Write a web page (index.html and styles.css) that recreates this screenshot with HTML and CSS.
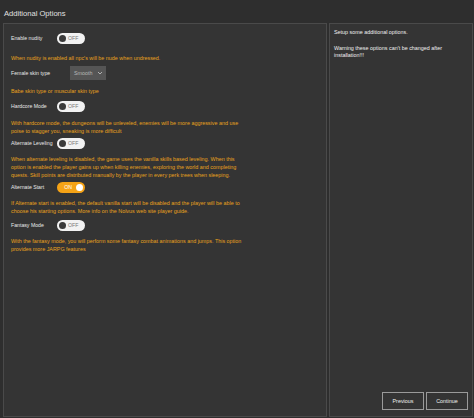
FILE: index.html
```html
<!DOCTYPE html>
<html>
<head>
<meta charset="utf-8">
<link rel="stylesheet" href="styles.css">
</head>
<body>
<div class="app">
  <div class="title">Additional Options</div>
  <div class="main">
    <div class="panel left">
      <div class="option">
        <div class="row"><span class="label">Enable nudity</span><span class="toggle off"><span class="knob"></span><span class="ttext">OFF</span></span></div>
        <p class="desc">When nudity is enabled all npc's will be nude when undressed.</p>
      </div>
      <div class="option">
        <div class="row"><span class="label wide">Female skin type</span><span class="select">Smooth<svg class="chev" viewBox="0 0 6 4" width="6" height="4"><path d="M1 1 L3 3 L5 1" fill="none" stroke="#bbb" stroke-width="0.9"/></svg></span></div>
        <p class="desc">Babe skin type or muscular skin type</p>
      </div>
      <div class="option">
        <div class="row"><span class="label">Hardcore Mode</span><span class="toggle off"><span class="knob"></span><span class="ttext">OFF</span></span></div>
        <p class="desc">With hardcore mode, the dungeons will be unleveled, enemies will be more aggressive and use poise to stagger you, sneaking is more difficult</p>
      </div>
      <div class="option">
        <div class="row"><span class="label">Alternate Leveling</span><span class="toggle off"><span class="knob"></span><span class="ttext">OFF</span></span></div>
        <p class="desc">When alternate leveling is disabled, the game uses the vanilla skills based leveling. When this option is enabled the player gains up when killing enemies, exploring the world and completing quests. Skill points are distributed manually by the player in every perk trees when sleeping.</p>
      </div>
      <div class="option">
        <div class="row"><span class="label">Alternate Start</span><span class="toggle on"><span class="ttext">ON</span><span class="knob"></span></span></div>
        <p class="desc">If Alternate start is enabled, the default vanilla start will be disabled and the player will be able to choose his starting options. More info on the Nolvus web site player guide.</p>
      </div>
      <div class="option">
        <div class="row"><span class="label">Fantasy Mode</span><span class="toggle off"><span class="knob"></span><span class="ttext">OFF</span></span></div>
        <p class="desc">With the fantasy mode, you will perform some fantasy combat animations and jumps. This option provides more JARPG features</p>
      </div>
    </div>
    <div class="panel right">
      <div class="info">
        <p>Setup some additional options.</p>
        <p>Warning these options can't be changed after installation!!!</p>
      </div>
      <div class="buttons">
        <button class="btn">Previous</button>
        <button class="btn">Continue</button>
      </div>
    </div>
  </div>
</div>
</body>
</html>
```
FILE: styles.css
```css
* { box-sizing: border-box; }
html, body { margin: 0; padding: 0; }
body {
  width: 474px;
  height: 418px;
  background: #2e2e2e;
  font-family: "Liberation Sans", Arial, sans-serif;
  color: #e6e6e6;
  overflow: hidden;
}
.app {
  display: flex;
  flex-direction: column;
  height: 418px;
}
.title {
  height: 23px;
  padding: 8px 0 0 4px;
  font-size: 7.6px;
  color: #e0e0e0;
  line-height: 12px;
}
.main {
  flex: 1;
  display: flex;
  gap: 2px;
  padding: 0 1px 1px 3px;
}
.panel {
  background: #343434;
  border: 1px solid #4a4a4a;
}
.left {
  width: 324px;
  padding: 8px 8px 0 7px;
}
.right {
  flex: 1;
  display: flex;
  flex-direction: column;
  justify-content: space-between;
  padding: 5px 4px 6px 4px;
}
.option {
  margin-bottom: 5px;
}
.option:nth-child(3),
.option:nth-child(4) { margin-bottom: 2px; }
.option:nth-child(5) { margin-bottom: 4px; }
.row {
  display: flex;
  align-items: center;
  height: 12px;
}
.label {
  width: 46px;
  font-size: 5.2px;
  color: #e8e8e8;
  white-space: nowrap;
}
.label.wide { width: 59px; }
.toggle {
  width: 28px;
  height: 11px;
  border-radius: 6px;
  display: flex;
  align-items: center;
  padding: 0 2px;
  gap: 2px;
}
.toggle.off { background: #f2f2f2; }
.toggle.on { background: #f5a316; justify-content: flex-end; }
.knob {
  width: 7px;
  height: 7px;
  border-radius: 50%;
}
.off .knob { background: #3a3a3a; }
.on .knob { background: #ffffff; }
.ttext {
  font-size: 5.2px;
  line-height: 7px;
}
.off .ttext { color: #777; }
.on .ttext { color: #fff; margin-right: 2px; }
.select {
  width: 36px;
  height: 14px;
  background: #555555;
  color: #b8b8b8;
  font-size: 5.4px;
  display: flex;
  align-items: center;
  justify-content: space-between;
  padding: 0 3px 0 4px;
}
.chev { display: block; }
.desc {
  margin: 6px 0 0 0;
  width: 232px;
  font-size: 5.4px;
  line-height: 8px;
  color: #e8a21c;
}
.option:nth-child(1) .desc { margin-top: 10px; }
.option:nth-child(2) .desc { margin-top: 8px; }
.option:nth-child(3) .desc { margin-top: 7px; }
.info p {
  margin: 0 0 9px 0;
  font-size: 5.4px;
  line-height: 7px;
  color: #f0f0f0;
  width: 110px;
}
.buttons {
  display: flex;
  justify-content: flex-end;
  gap: 2px;
}
.btn {
  width: 42px;
  height: 18px;
  background: #343434;
  border: 1px solid #9a9a9a;
  color: #f0f0f0;
  font-family: "Liberation Sans", Arial, sans-serif;
  font-size: 5.4px;
  padding: 0;
}
```
